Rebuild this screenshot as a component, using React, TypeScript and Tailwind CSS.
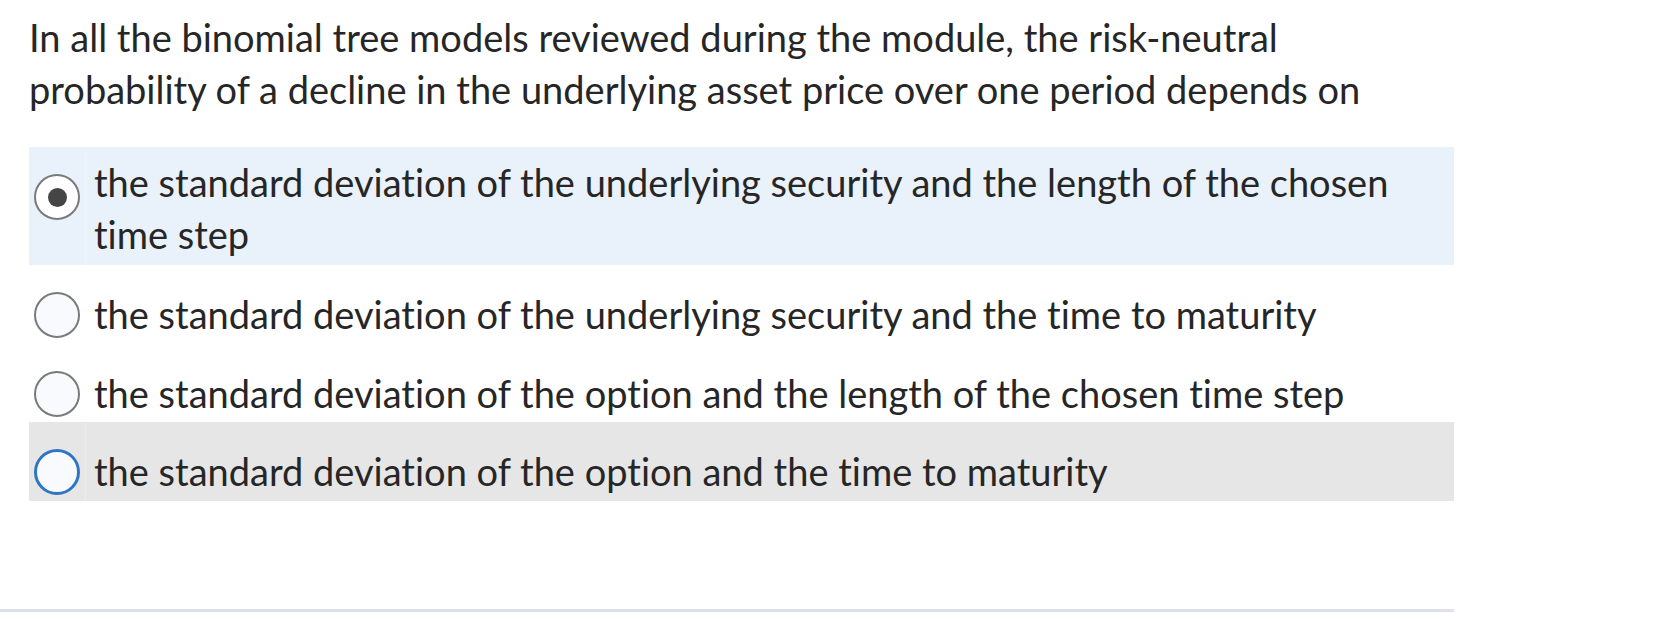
import React from "react";

type Opt = { text: string; state: "selected" | "none" | "focus"; bg: string; h: string; pt: string; divider: string };

const options: Opt[] = [
  {
    text: "the standard deviation of the underlying security and the length of the chosen time step",
    state: "selected",
    bg: "bg-[#e9f1fb]",
    h: "h-[118px]",
    pt: "pt-[9px]",
    divider: "border-[#eef4fc]",
  },
  {
    text: "the standard deviation of the underlying security and the time to maturity",
    state: "none",
    bg: "bg-white",
    h: "h-[79px]",
    pt: "pt-[23px]",
    divider: "border-transparent",
  },
  {
    text: "the standard deviation of the option and the length of the chosen time step",
    state: "none",
    bg: "bg-white",
    h: "h-[78px]",
    pt: "pt-[23px]",
    divider: "border-transparent",
  },
  {
    text: "the standard deviation of the option and the time to maturity",
    state: "focus",
    bg: "bg-[#e6e6e6]",
    h: "h-[79px]",
    pt: "pt-[23px]",
    divider: "border-[#ececec]",
  },
];

function Radio({ state }: { state: Opt["state"] }) {
  if (state === "selected") {
    return (
      <div className="w-[46px] h-[46px] rounded-full border-2 border-[#7a7a7a] bg-white flex items-center justify-center">
        <div className="w-[19px] h-[19px] rounded-full bg-[#454545]" />
      </div>
    );
  }
  if (state === "focus") {
    return <div className="w-[46px] h-[46px] rounded-full border-[3px] border-[#2f76c2] bg-[#f8fafe]" />;
  }
  return <div className="w-[46px] h-[46px] rounded-full border-2 border-[#7a7a7a] bg-[#f8fafe]" />;
}

export default function App() {
  return (
    <div className="w-[1678px] h-[637px] bg-white font-['Lato',sans-serif] text-[#262626] overflow-hidden [font-variant-ligatures:none]">
      <div className="w-[1454px]">
        <p className="pl-[29px] pt-[11px] text-[38px] leading-[52px] w-[1380px]">
          In all the binomial tree models reviewed during the module, the risk-neutral probability of a decline in the
          underlying asset price over one period depends on
        </p>
        <div className="ml-[29px] mt-[32px] flex flex-col">
          {options.map((o, i) => (
            <div key={i} className={`flex ${o.bg} ${o.h}`}>
              <div className={`w-[57px] shrink-0 border-r ${o.divider} pt-[27px] pl-[5px]`}>
                <Radio state={o.state} />
              </div>
              <p className={`pl-[8px] ${o.pt} text-[38px] leading-[52px]`}>{o.text}</p>
            </div>
          ))}
        </div>
        <div className="mt-[108px] h-[3px] bg-[#dde2e8]" />
      </div>
    </div>
  );
}
